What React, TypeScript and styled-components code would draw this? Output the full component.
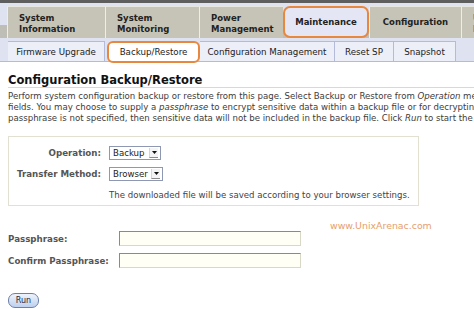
import React from 'react';
import styled, { createGlobalStyle } from 'styled-components';

const GlobalStyle = createGlobalStyle`
  html, body {
    margin: 0;
    padding: 0;
    background: #ffffff;
    overflow: hidden;
  }
  body {
    font-family: 'DejaVu Sans', Verdana, sans-serif;
  }
`;

const Page = styled.div`
  position: relative;
  width: 474px;
  height: 309px;
  overflow: hidden;
`;

const TopBar = styled.div`
  height: 3px;
  background: #5e5e5e;
`;

const MainNav = styled.div`
  display: flex;
  height: 32px;
  padding: 3px 0 0 7px;
  background: linear-gradient(#dfe2f0 0, #dfe2f0 62%, #bfbeb6 62%);
  border-bottom: 3px solid #dfe2f0;
`;

const MainTab = styled.div<{ $w: number; $single?: boolean; $active?: boolean }>`
  box-sizing: border-box;
  flex: 0 0 ${(p) => p.$w}px;
  display: flex;
  align-items: ${(p) => (p.$single ? 'center' : 'flex-start')};
  justify-content: ${(p) => (p.$single ? 'center' : 'flex-start')};
  padding: ${(p) => (p.$single ? '0' : '6px 0 0 11px')};
  background: ${(p) => (p.$active ? '#e4e6f6' : '#c6c4b6')};
  border-left: 1px solid #eeede6;
  border-top: 1px solid #e8e7df;
  font-size: 8.5px;
  font-weight: bold;
  line-height: 11px;
  color: #222;
  ${(p) =>
    p.$active &&
    `
    border: 2px solid #e8883f;
    border-radius: 7px;
  `}
`;

const SubNav = styled.div`
  display: flex;
  height: 20px;
  padding-left: 8px;
  background: #dfe2f0;
  border-bottom: 1px solid #b3bbd9;
`;

const SubTab = styled.div<{ $w: number; $active?: boolean }>`
  box-sizing: border-box;
  flex: 0 0 ${(p) => p.$w}px;
  display: flex;
  align-items: center;
  justify-content: center;
  background: ${(p) => (p.$active ? '#ffffff' : '#eceef8')};
  border-top: 1px solid #b3bbd9;
  border-right: 1px solid #b3bbd9;
  font-size: 8.7px;
  color: #222;
  ${(p) =>
    p.$active &&
    `
    border: 2px solid #e8883f;
    border-radius: 6px;
    height: 22px;
    margin-left: 2px;
  `}
`;

const Content = styled.div`
  padding: 0 0 0 8px;
`;

const Heading = styled.h1`
  margin: 11px 0 0;
  padding: 0;
  font-size: 11.5px;
  line-height: 14px;
  font-weight: bold;
  color: #111;
  border-bottom: 1px solid #d3d6ec;
  white-space: nowrap;
`;

const Intro = styled.div`
  margin-top: 3px;
  font-size: 8.6px;
  line-height: 11px;
  color: #3c3c3c;
  white-space: nowrap;
`;

const OptionsBox = styled.div`
  box-sizing: border-box;
  width: 411px;
  height: 70px;
  margin-top: 12px;
  padding-top: 5px;
  border: 1px solid #e2e0d0;
`;

const OptionRow = styled.div`
  display: grid;
  grid-template-columns: 92px auto;
  column-gap: 8px;
  align-items: center;
  height: 21px;
`;

const Label = styled.span<{ $right?: boolean }>`
  font-size: 8.7px;
  font-weight: bold;
  color: #555;
  text-align: ${(p) => (p.$right ? 'right' : 'left')};
  white-space: nowrap;
`;

const Note = styled.span`
  font-size: 8.6px;
  color: #444;
  white-space: nowrap;
`;

const Select = styled.div<{ $w: number }>`
  box-sizing: border-box;
  display: flex;
  align-items: center;
  justify-content: space-between;
  width: ${(p) => p.$w}px;
  height: 14px;
  padding: 0 2px 0 3px;
  border: 1px solid #8e98b2;
  background: #fff;
  font-size: 8.6px;
  color: #222;
`;

const Arrow = styled.span`
  display: flex;
  align-items: center;
  justify-content: center;
  width: 8px;
  height: 9px;
  border-left: 1px solid #d6d6d6;
  border-bottom: 1px solid #8a8a8a;
  background: #f4f4f4;
`;

const PassForm = styled.div`
  display: grid;
  grid-template-columns: 111px 182px;
  row-gap: 7px;
  align-items: center;
  margin-top: 25px;
`;

const TextInput = styled.div`
  box-sizing: border-box;
  height: 15px;
  border: 1px solid;
  border-color: #8a8a8a #d9d8c6 #d9d8c6 #8a8a8a;
  background: #fffff6;
`;

const RunButton = styled.button`
  box-sizing: border-box;
  display: block;
  width: 31px;
  height: 15px;
  margin-top: 25px;
  padding: 0;
  border: 1px solid #6d80a6;
  border-radius: 7px;
  background: linear-gradient(#eef4fc, #bdd0ee);
  font-family: 'DejaVu Sans', sans-serif;
  font-size: 8px;
  color: #1b2a48;
`;

const Watermark = styled.div`
  position: absolute;
  left: 330px;
  top: 220px;
  font-family: 'DejaVu Sans', sans-serif;
  font-size: 9.4px;
  color: #e7a06a;
  white-space: nowrap;
`;

const DownArrow = () => (
  <svg width="5" height="3" viewBox="0 0 5 3">
    <path d="M0 0h5L2.5 3z" fill="#111" />
  </svg>
);

const mainTabs = [
  { label: ['System', 'Information'], w: 98 },
  { label: ['System', 'Monitoring'], w: 94 },
  { label: ['Power', 'Management'], w: 84 },
  { label: ['Maintenance'], w: 86, active: true },
  { label: ['Configuration'], w: 92 },
  { label: ['User', 'Management'], w: 90 },
];

const subTabs = [
  { label: 'Firmware Upgrade', w: 97 },
  { label: 'Backup/Restore', w: 93, active: true },
  { label: 'Configuration Management', w: 135 },
  { label: 'Reset SP', w: 59 },
  { label: 'Snapshot', w: 62 },
];

const App: React.FC = () => {
  return (
    <>
      <GlobalStyle />
      <Page>
        <TopBar />
        <MainNav>
          {mainTabs.map((t) => (
            <MainTab key={t.label.join(' ')} $w={t.w} $single={t.label.length === 1} $active={t.active}>
              <div>
                {t.label.map((l) => (
                  <div key={l}>{l}</div>
                ))}
              </div>
            </MainTab>
          ))}
        </MainNav>
        <SubNav>
          {subTabs.map((t) => (
            <SubTab key={t.label} $w={t.w} $active={t.active}>
              {t.label}
            </SubTab>
          ))}
        </SubNav>
        <Content>
          <Heading>Configuration Backup/Restore</Heading>
          <Intro>
            <div>
              Perform system configuration backup or restore from this page. Select Backup or Restore from <i>Operation</i> menu and fill in the appropriate
            </div>
            <div>
              fields. You may choose to supply a <i>passphrase</i> to encrypt sensitive data within a backup file or for decrypting sensitive data in a backup file being restored. If a
            </div>
            <div>
              passphrase is not specified, then sensitive data will not be included in the backup file. Click <i>Run</i> to start the operation.
            </div>
          </Intro>
          <OptionsBox>
            <OptionRow>
              <Label $right>Operation:</Label>
              <Select $w={52}>
                Backup
                <Arrow>
                  <DownArrow />
                </Arrow>
              </Select>
            </OptionRow>
            <OptionRow>
              <Label $right>Transfer Method:</Label>
              <Select $w={54}>
                Browser
                <Arrow>
                  <DownArrow />
                </Arrow>
              </Select>
            </OptionRow>
            <OptionRow>
              <span />
              <Note>The downloaded file will be saved according to your browser settings.</Note>
            </OptionRow>
          </OptionsBox>
          <PassForm>
            <Label>Passphrase:</Label>
            <TextInput />
            <Label>Confirm Passphrase:</Label>
            <TextInput />
          </PassForm>
          <RunButton>Run</RunButton>
        </Content>
        <Watermark>www.UnixArenac.com</Watermark>
      </Page>
    </>
  );
};

export default App;
